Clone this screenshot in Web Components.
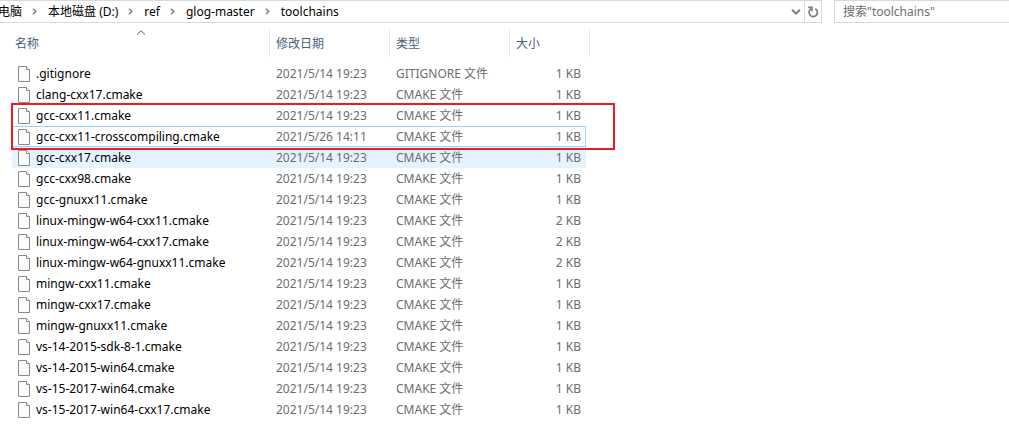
<!DOCTYPE html>
<html lang="zh-CN">
<head>
<meta charset="utf-8">
<meta name="viewport" content="width=device-width, initial-scale=1">
<title>toolchains</title>
<style>
  body {
    margin: 0;
    background: #fff;
    color: #000;
    font: 12px/20px "Noto Sans", "Noto Sans CJK SC", sans-serif;
    --line: #d9d9d9;
    --dim: #6d6d6d;
    --heading: #4c607a;
    --hover: #e5f3ff;
    --focus: #99d1ff;
    --mark: #ed1c24;
  }
</style>
</head>
<body>
<explorer-window>
  <address-bar slot="bar">
    <path-crumb>电脑</path-crumb>
    <path-crumb>本地磁盘 (D:)</path-crumb>
    <path-crumb>ref</path-crumb>
    <path-crumb>glog-master</path-crumb>
    <path-crumb last>toolchains</path-crumb>
  </address-bar>
  <search-box slot="bar" placeholder='搜索"toolchains"'></search-box>
  <file-list></file-list>
</explorer-window>

<script>
const define = (name, html, setup) => {
  const template = document.createElement('template');
  template.innerHTML = html;
  customElements.define(name, class extends HTMLElement {
    connectedCallback() {
      if (this.shadowRoot) return;
      const shadow = this.attachShadow({ mode: 'open' });
      shadow.append(template.content.cloneNode(true));
      setup?.(this, shadow);
    }
  });
};

define('explorer-window', `
  <style>
    :host { display: block; }
    header { display: flex; gap: 12px; }
    main { padding: 7px 12px 0; }
  </style>
  <header><slot name="bar"></slot></header>
  <main><slot></slot></main>
`);

define('address-bar', `
  <style>
    :host {
      display: flex;
      flex: 1;
      min-width: 0;
      box-sizing: border-box;
      height: 23px;
      border: 1px solid var(--line);
      border-left: none;
    }
    nav { display: flex; flex: 1; min-width: 0; overflow: hidden; }
    ::slotted(:first-child) { margin-left: -2px; }
    button {
      display: flex;
      align-items: center;
      justify-content: center;
      width: 16px;
      padding: 0;
      border: none;
      background: none;
      color: #808080;
    }
    .refresh { border-left: 1px solid var(--line); width: 17px; }
    button:hover { background: var(--hover); }
  </style>
  <nav aria-label="路径"><slot></slot></nav>
  <button aria-label="以前的位置">
    <svg width="10" height="6" viewBox="0 0 10 6" fill="none" stroke="currentColor" stroke-width="2" aria-hidden="true"><path d="M1 .8 5 4.6 9 .8"/></svg>
  </button>
  <button class="refresh" aria-label="刷新">
    <svg width="12" height="12" viewBox="0 0 12 12" fill="none" stroke="currentColor" aria-hidden="true">
      <path d="M4.4 2.6A4.2 4.2 0 1 0 8.3 2.7" stroke-width="1.8"/>
      <path d="M1.2 1.4H5V5.4" stroke-width="1.6"/>
    </svg>
  </button>
`);

define('path-crumb', `
  <style>
    :host { display: flex; align-items: center; flex-shrink: 0; }
    a { color: inherit; text-decoration: none; white-space: nowrap; }
    a:hover { background: var(--hover); }
    svg { margin: 0 11px 0 10px; color: #808080; }
    :host([last]) svg { display: none; }
  </style>
  <a href="#"><slot></slot></a>
  <svg width="5" height="7" viewBox="0 0 5 7" fill="none" stroke="currentColor" stroke-width="1.5" aria-hidden="true"><path d="M1 .7 3.8 3.5 1 6.3"/></svg>
`);

define('search-box', `
  <style>
    :host {
      display: block;
      flex: 0 0 175px;
      box-sizing: border-box;
      height: 23px;
      border: 1px solid var(--line);
      border-right: none;
    }
    input {
      display: block;
      box-sizing: border-box;
      width: 100%;
      height: 100%;
      padding: 0 8px;
      border: none;
      outline: none;
      background: none;
      font: inherit;
    }
    input::placeholder { color: var(--dim); opacity: 1; }
  </style>
  <input type="search">
`, (host, shadow) => {
  const input = shadow.querySelector('input');
  input.placeholder = host.getAttribute('placeholder');
  input.setAttribute('aria-label', input.placeholder);
});

define('file-icon', `
  <style>
    :host { display: block; width: 12px; height: 16px; }
    svg { display: block; }
  </style>
  <svg width="12" height="16" viewBox="0 0 12 16" aria-hidden="true">
    <path d="M.5 .5H8.5L11.5 3.5V15.5H.5Z" fill="#fafafa" stroke="#8c8c8c"/>
    <path d="M8.5 .5V3.5H11.5" fill="#fff" stroke="#8c8c8c"/>
  </svg>
`);

// name, modified, type, size in KB, row state
const FILES = [
  ['.gitignore', '2021/5/14 19:23', 'GITIGNORE', 1],
  ['clang-cxx17.cmake', '2021/5/14 19:23', 'CMAKE', 1],
  ['gcc-cxx11.cmake', '2021/5/14 19:23', 'CMAKE', 1],
  ['gcc-cxx11-crosscompiling.cmake', '2021/5/26 14:11', 'CMAKE', 1, 'focused'],
  ['gcc-cxx17.cmake', '2021/5/14 19:23', 'CMAKE', 1, 'hovered'],
  ['gcc-cxx98.cmake', '2021/5/14 19:23', 'CMAKE', 1],
  ['gcc-gnuxx11.cmake', '2021/5/14 19:23', 'CMAKE', 1],
  ['linux-mingw-w64-cxx11.cmake', '2021/5/14 19:23', 'CMAKE', 2],
  ['linux-mingw-w64-cxx17.cmake', '2021/5/14 19:23', 'CMAKE', 2],
  ['linux-mingw-w64-gnuxx11.cmake', '2021/5/14 19:23', 'CMAKE', 2],
  ['mingw-cxx11.cmake', '2021/5/14 19:23', 'CMAKE', 1],
  ['mingw-cxx17.cmake', '2021/5/14 19:23', 'CMAKE', 1],
  ['mingw-gnuxx11.cmake', '2021/5/14 19:23', 'CMAKE', 1],
  ['vs-14-2015-sdk-8-1.cmake', '2021/5/14 19:23', 'CMAKE', 1],
  ['vs-14-2015-win64.cmake', '2021/5/14 19:23', 'CMAKE', 1],
  ['vs-15-2017-win64.cmake', '2021/5/14 19:23', 'CMAKE', 1],
  ['vs-15-2017-win64-cxx17.cmake', '2021/5/14 19:23', 'CMAKE', 1],
];

define('file-list', `
  <style>
    :host { display: block; position: relative; --row: 21px; --head: 33px; }
    table { table-layout: fixed; width: 578px; border-collapse: separate; border-spacing: 0; }
    col.name { width: 258px; }
    col.date, col.type { width: 120px; }
    th, td { box-sizing: border-box; padding: 0 0 0 6px; text-align: left; white-space: nowrap; }
    th { height: var(--head); padding: 0 0 6px; font-weight: normal; color: var(--heading); }
    th button {
      display: flex;
      align-items: center;
      position: relative;
      width: 100%;
      height: 27px;
      padding: 0 0 0 6px;
      border: none;
      border-right: 1px solid #e5e5e5;
      background: none;
      color: inherit;
      font: inherit;
    }
    th:first-child button { padding-left: 3px; }
    th svg { position: absolute; top: 0; left: 50%; translate: -50% 0; }
    td { height: var(--row); line-height: var(--row); color: var(--dim); }
    td:first-child { color: #000; }
    td:last-child {
      padding-right: 5px;
      border-right: 4px solid transparent;
      background-clip: padding-box;
      text-align: right;
    }
    .file { display: flex; align-items: center; gap: 6px; }
    .hovered td, tbody tr:hover td { background-color: var(--hover); }
    .focused td { box-shadow: inset 0 1px var(--focus), inset 0 -1px var(--focus); }
    .focused td:last-child { box-shadow: inset -1px 1px var(--focus), inset 0 -1px var(--focus); }
    /* marker drawn over the third and fourth rows */
    .mark {
      position: absolute;
      top: calc(var(--head) + 2 * var(--row) - 2px);
      left: -1px;
      box-sizing: border-box;
      width: 604px;
      height: calc(2 * var(--row) + 5px);
      border: 2px solid var(--mark);
      pointer-events: none;
    }
  </style>
  <table>
    <colgroup><col class="name"><col class="date"><col class="type"><col></colgroup>
    <thead>
      <tr>
        <th aria-sort="ascending"><button>名称<svg width="9" height="5" viewBox="0 0 9 5" fill="none" stroke="#606060" aria-hidden="true"><path d="M.5 4.5 4.5 .8 8.5 4.5"/></svg></button></th>
        <th><button>修改日期</button></th>
        <th><button>类型</button></th>
        <th><button>大小</button></th>
      </tr>
    </thead>
    <tbody></tbody>
  </table>
  <div class="mark"></div>
`, (host, shadow) => {
  shadow.querySelector('tbody').innerHTML = FILES.map(([name, date, type, size, state = '']) => `
    <tr class="${state}">
      <td><div class="file"><file-icon></file-icon>${name}</div></td>
      <td>${date}</td>
      <td>${type} 文件</td>
      <td>${size} KB</td>
    </tr>`).join('');
});
</script>
</body>
</html>
